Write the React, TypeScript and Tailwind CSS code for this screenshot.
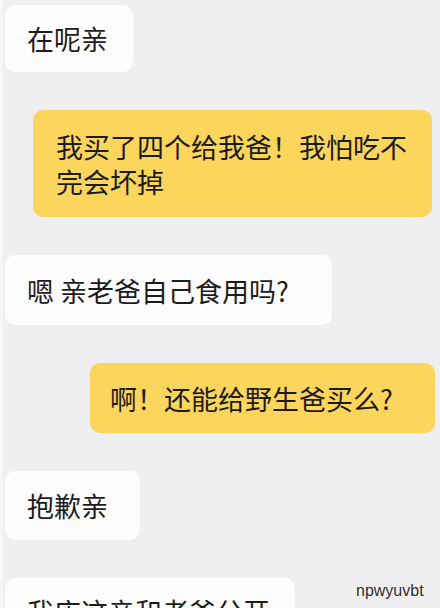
const font = { fontFamily: '"Noto Sans CJK SC", "Noto Sans", sans-serif' };

type Msg = { text: string; mine?: boolean; cls: string };

const messages: Msg[] = [
  { text: "在呢亲", cls: "w-[128px] h-[67px] pl-[22px]" },
  {
    text: "我买了四个给我爸！我怕吃不完会坏掉",
    mine: true,
    cls: "w-[399px] h-[107px] pl-[23px] pr-[20px] mr-[8px]",
  },
  { text: "嗯 亲老爸自己食用吗?", cls: "w-[327px] h-[70px] pl-[22px]" },
  { text: "啊！还能给野生爸买么?", mine: true, cls: "w-[345px] h-[70px] pl-[20px] mr-[5px]" },
  { text: "抱歉亲", cls: "w-[135px] h-[69px] pl-[22px]" },
  { text: "我店这亲和老爸分开", cls: "w-[290px] h-[70px] pl-[22px]" },
];

export default function App() {
  return (
    <div
      className="relative w-[440px] h-[608px] overflow-hidden bg-[#efeef1] border-l-[3px] border-[#f6f6f7]"
      style={font}
    >
      <div className="flex flex-col gap-[38px] pt-[5px] pl-[2px]">
        {messages.map((m, i) => (
          <div key={i} className={m.mine ? "flex justify-end" : "flex justify-start"}>
            <div
              className={`${m.cls} flex items-center rounded-[10px] text-[27px] leading-[35px] text-[#1c1c1c] ${
                m.mine ? "bg-[#fcd55c]" : "bg-[#fdfdfd]"
              } ${i === 5 ? "items-start pt-[16px]" : ""}`}
            >
              <span>{m.text}</span>
            </div>
          </div>
        ))}
      </div>

      {/* watermark */}
      <div
        className="absolute left-[353px] top-[579px] text-[16px] text-[#2a2a2a] [text-shadow:0_0_2px_#fff,0_0_2px_#fff]"
        style={{ fontFamily: '"Liberation Sans", Arial, sans-serif' }}
      >
        npwyuvbt
      </div>
    </div>
  );
}
